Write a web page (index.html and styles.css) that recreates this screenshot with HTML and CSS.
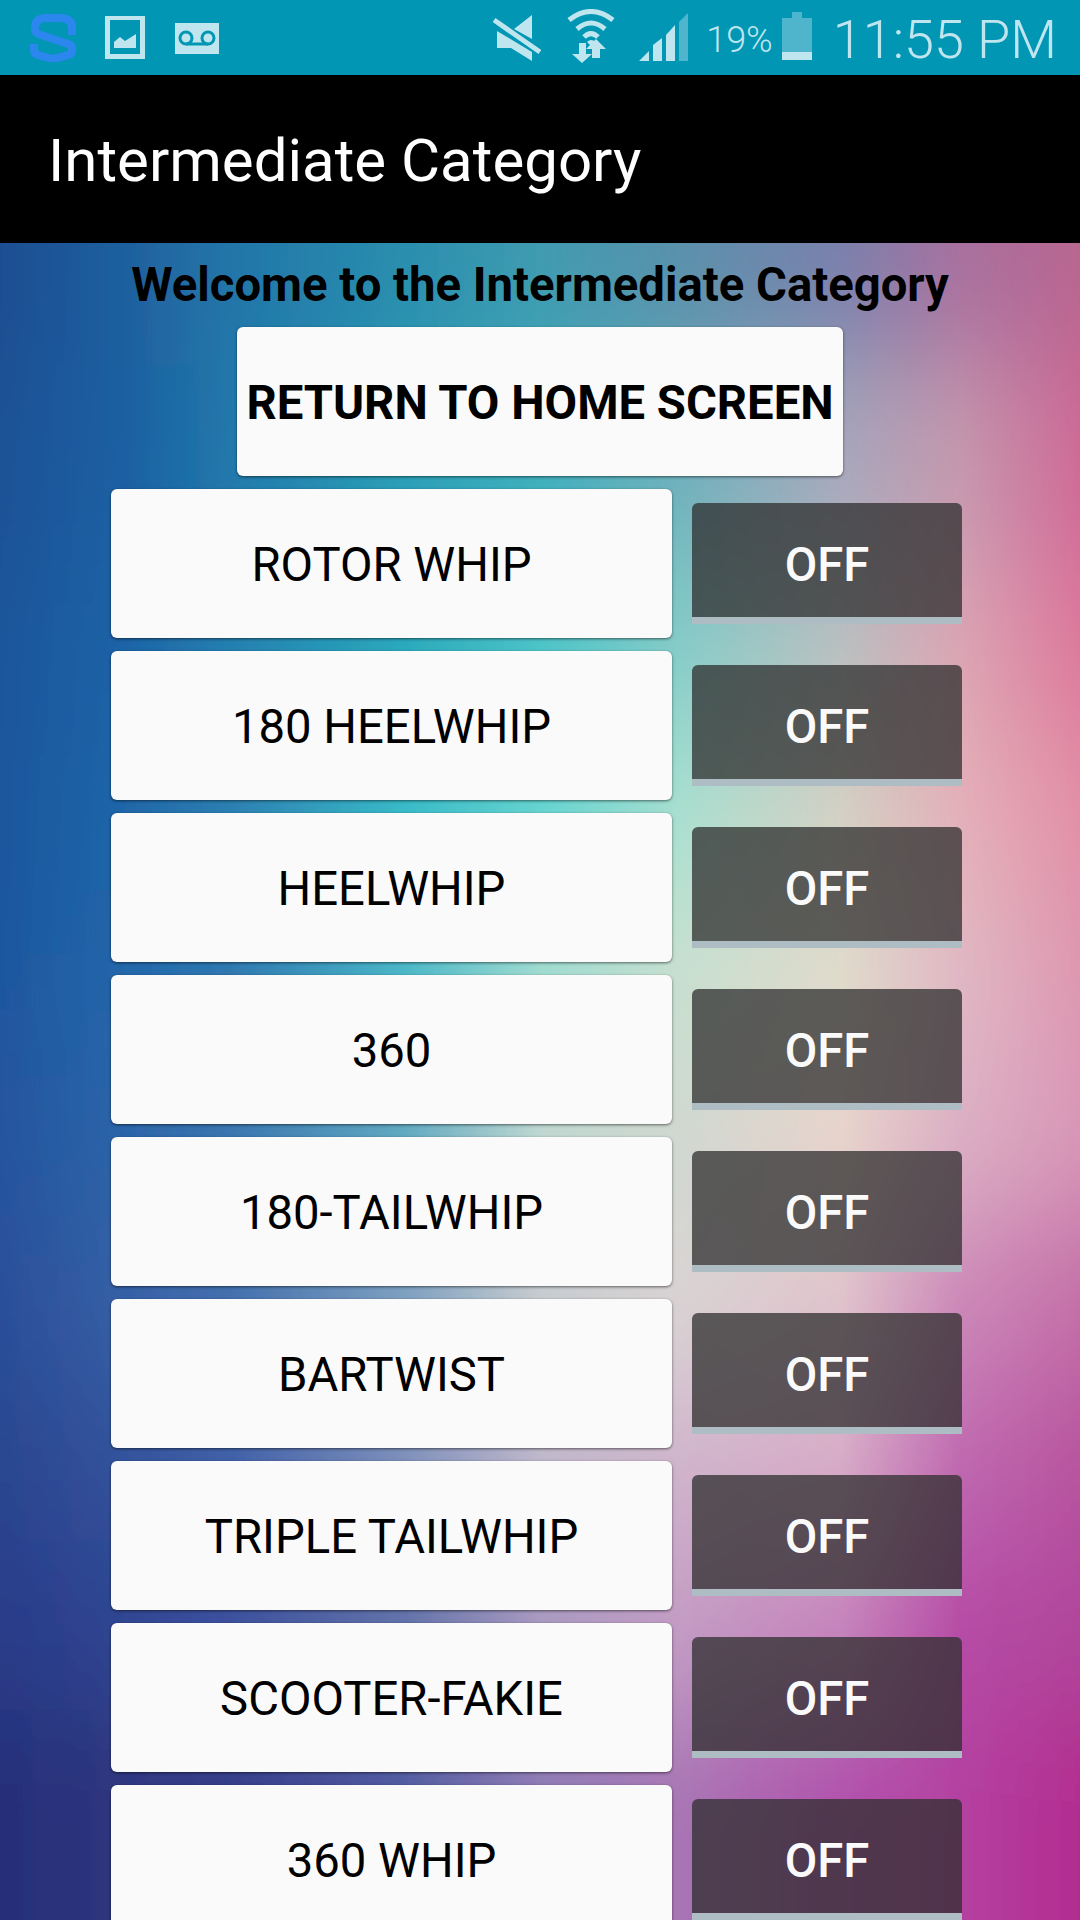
FILE: index.html
```html
<!DOCTYPE html>
<html>
<head>
    <title>Intermediate Category</title>
    <link rel="stylesheet" href="styles.css">
</head>
<body>
    <div class="status-bar">
        <svg class="icon-s" width="46" height="48" viewBox="0 0 46 48">
            <path d="M42 21V14Q42 4 30 4H16Q5 4 5 14V16Q5 19 10 20.500L38 30Q42 31 42 35V37Q42 40 38 41L23 45L8 41Q4 40 4 36V30" fill="none" stroke="#2b87ee" stroke-width="8"/>
        </svg>
        <svg class="icon-image" width="40" height="43" viewBox="0 0 40 43">
            <path fill-rule="evenodd" d="M0 0H40V43H0ZM5 4V38H35V4Z" fill="#bfe5ee"/>
            <path d="M9 32V26L15 21L20 25L31 18V32Z" fill="#bfe5ee"/>
        </svg>
        <svg class="icon-voicemail" width="44" height="31" viewBox="0 0 44 31">
            <rect width="44" height="31" fill="#bfe5ee"/>
            <circle cx="11" cy="15" r="6" fill="none" stroke="#0096b4" stroke-width="3"/>
            <circle cx="33" cy="15" r="6" fill="none" stroke="#0096b4" stroke-width="3"/>
            <path d="M11 21H33" stroke="#0096b4" stroke-width="3"/>
        </svg>
        <div class="status-right">
            <svg class="icon-mute" width="48" height="46" viewBox="0 0 48 46">
                <path d="M21 14L39 0V24ZM4 16L39 37V46L18 33H4Z" fill="#bfe5ee"/>
                <path d="M1 5L47 37" stroke="#bfe5ee" stroke-width="5"/>
            </svg>
            <svg class="icon-wifi" width="50" height="54" viewBox="0 0 50 54">
                <path d="M3 11Q25 -6 47 11" fill="none" stroke="#bfe5ee" stroke-width="5"/>
                <path d="M11 20Q25 8 39 20" fill="none" stroke="#bfe5ee" stroke-width="5"/>
                <path d="M18 28Q25 21 32 28" fill="none" stroke="#bfe5ee" stroke-width="5"/>
                <path d="M21 33Q25 29 30 33L25 37Z" fill="#bfe5ee"/>
                <path d="M13 34H20V45H26L16 54L6 45H13ZM26 49V40H20L30 30L40 40H34V49Z" fill="#bfe5ee"/>
            </svg>
            <svg class="icon-signal" width="49" height="48" viewBox="0 0 49 48">
                <path d="M0 48L10 38V48ZM14 48V32L23 25V48ZM27 48V22L36 12V48Z" fill="#bfe5ee"/>
                <path d="M40 48V9L49 0V48Z" fill="#4fb5cc"/>
            </svg>
            <span class="battery-text">19%</span>
            <div class="battery">
                <div class="battery-cap"></div>
                <div class="battery-body"><div class="battery-level"></div></div>
            </div>
            <span class="clock">11:55 PM</span>
        </div>
    </div>

    <div class="app-bar">Intermediate Category</div>

    <div class="content">
        <!-- wallpaper: colour bands blurred together top to bottom -->
        <svg class="wallpaper" width="1080" height="1677" viewBox="0 243 1080 1677">
            <defs>
                <filter id="soften" filterUnits="userSpaceOnUse" x="0" y="0" width="1080" height="2200">
                    <feGaussianBlur stdDeviation="0 60"/>
                </filter>
                <linearGradient id="band1" gradientUnits="userSpaceOnUse" x1="0" x2="1080" y1="0" y2="0">
                    <stop offset="0" stop-color="#1f4e92"/><stop offset="0.111" stop-color="#1f5f9e"/><stop offset="0.213" stop-color="#2275a8"/><stop offset="0.374" stop-color="#2a8eae"/><stop offset="0.5" stop-color="#3f9bb0"/><stop offset="0.63" stop-color="#5a90ab"/><stop offset="0.778" stop-color="#7a80ac"/><stop offset="0.889" stop-color="#a8709f"/><stop offset="1" stop-color="#b86690"/>
                </linearGradient>
                <linearGradient id="band2" gradientUnits="userSpaceOnUse" x1="0" x2="1080" y1="0" y2="0">
                    <stop offset="0" stop-color="#1d5296"/><stop offset="0.111" stop-color="#1b5fa2"/><stop offset="0.213" stop-color="#2178ab"/><stop offset="0.374" stop-color="#2a9fb6"/><stop offset="0.5" stop-color="#40aebc"/><stop offset="0.63" stop-color="#6fb0bc"/><stop offset="0.778" stop-color="#a8a8bc"/><stop offset="0.889" stop-color="#c598ae"/><stop offset="1" stop-color="#cf6b98"/>
                </linearGradient>
                <linearGradient id="band3" gradientUnits="userSpaceOnUse" x1="0" x2="1080" y1="0" y2="0">
                    <stop offset="0" stop-color="#1d559a"/><stop offset="0.111" stop-color="#1c62a6"/><stop offset="0.213" stop-color="#2480b0"/><stop offset="0.374" stop-color="#2aa8bc"/><stop offset="0.5" stop-color="#4cc4c8"/><stop offset="0.63" stop-color="#85ccc8"/><stop offset="0.778" stop-color="#b8c0c0"/><stop offset="0.889" stop-color="#dca4b4"/><stop offset="1" stop-color="#dd7a9c"/>
                </linearGradient>
                <linearGradient id="band4" gradientUnits="userSpaceOnUse" x1="0" x2="1080" y1="0" y2="0">
                    <stop offset="0" stop-color="#1f569c"/><stop offset="0.111" stop-color="#1f65a8"/><stop offset="0.213" stop-color="#2c80b2"/><stop offset="0.374" stop-color="#38bcc8"/><stop offset="0.5" stop-color="#60d4d0"/><stop offset="0.63" stop-color="#a8e0d0"/><stop offset="0.778" stop-color="#d4d0c4"/><stop offset="0.889" stop-color="#e4b0b8"/><stop offset="1" stop-color="#e290a8"/>
                </linearGradient>
                <linearGradient id="band5" gradientUnits="userSpaceOnUse" x1="0" x2="1080" y1="0" y2="0">
                    <stop offset="0" stop-color="#1f579e"/><stop offset="0.111" stop-color="#2066aa"/><stop offset="0.213" stop-color="#2f78b0"/><stop offset="0.374" stop-color="#4ab8c8"/><stop offset="0.5" stop-color="#a0dcd0"/><stop offset="0.63" stop-color="#c8e0d0"/><stop offset="0.778" stop-color="#e0dccc"/><stop offset="0.889" stop-color="#e0b8c4"/><stop offset="1" stop-color="#de98b0"/>
                </linearGradient>
                <linearGradient id="band6" gradientUnits="userSpaceOnUse" x1="0" x2="1080" y1="0" y2="0">
                    <stop offset="0" stop-color="#25559e"/><stop offset="0.111" stop-color="#2a64a8"/><stop offset="0.213" stop-color="#3a76b0"/><stop offset="0.374" stop-color="#60a8c0"/><stop offset="0.5" stop-color="#c0d8d0"/><stop offset="0.63" stop-color="#d0d8d0"/><stop offset="0.778" stop-color="#e8d4cc"/><stop offset="0.889" stop-color="#dcb0c4"/><stop offset="1" stop-color="#d898b8"/>
                </linearGradient>
                <linearGradient id="band7" gradientUnits="userSpaceOnUse" x1="0" x2="1080" y1="0" y2="0">
                    <stop offset="0" stop-color="#2b4f9a"/><stop offset="0.111" stop-color="#3560a6"/><stop offset="0.213" stop-color="#4470ae"/><stop offset="0.374" stop-color="#80a0c0"/><stop offset="0.5" stop-color="#c8ccd0"/><stop offset="0.63" stop-color="#dad4d4"/><stop offset="0.778" stop-color="#e0c4cc"/><stop offset="0.889" stop-color="#cc88b8"/><stop offset="1" stop-color="#c470a8"/>
                </linearGradient>
                <linearGradient id="band8" gradientUnits="userSpaceOnUse" x1="0" x2="1080" y1="0" y2="0">
                    <stop offset="0" stop-color="#2b4690"/><stop offset="0.111" stop-color="#33529c"/><stop offset="0.213" stop-color="#4060a8"/><stop offset="0.374" stop-color="#8090bc"/><stop offset="0.5" stop-color="#c0b8cc"/><stop offset="0.63" stop-color="#d0b4cc"/><stop offset="0.778" stop-color="#d8acc8"/><stop offset="0.889" stop-color="#bf68b0"/><stop offset="1" stop-color="#b8549f"/>
                </linearGradient>
                <linearGradient id="band9" gradientUnits="userSpaceOnUse" x1="0" x2="1080" y1="0" y2="0">
                    <stop offset="0" stop-color="#2a3c8a"/><stop offset="0.111" stop-color="#2f4592"/><stop offset="0.213" stop-color="#3c509e"/><stop offset="0.374" stop-color="#6070a8"/><stop offset="0.5" stop-color="#a898c0"/><stop offset="0.63" stop-color="#c49cc4"/><stop offset="0.778" stop-color="#c684bc"/><stop offset="0.889" stop-color="#b64ca6"/><stop offset="1" stop-color="#b0469c"/>
                </linearGradient>
                <linearGradient id="band10" gradientUnits="userSpaceOnUse" x1="0" x2="1080" y1="0" y2="0">
                    <stop offset="0" stop-color="#262e78"/><stop offset="0.111" stop-color="#2e357e"/><stop offset="0.213" stop-color="#363c88"/><stop offset="0.374" stop-color="#505aa0"/><stop offset="0.5" stop-color="#8c78b4"/><stop offset="0.63" stop-color="#a874b4"/><stop offset="0.778" stop-color="#b050ac"/><stop offset="0.889" stop-color="#b440a0"/><stop offset="1" stop-color="#b32c90"/>
                </linearGradient>
            </defs>
            <g filter="url(#soften)">
                <rect x="0" y="0" width="1080" height="365" fill="url(#band1)"/>
                <rect x="0" y="365" width="1080" height="200" fill="url(#band2)"/>
                <rect x="0" y="565" width="1080" height="165" fill="url(#band3)"/>
                <rect x="0" y="730" width="1080" height="160" fill="url(#band4)"/>
                <rect x="0" y="890" width="1080" height="160" fill="url(#band5)"/>
                <rect x="0" y="1050" width="1080" height="165" fill="url(#band6)"/>
                <rect x="0" y="1215" width="1080" height="165" fill="url(#band7)"/>
                <rect x="0" y="1380" width="1080" height="160" fill="url(#band8)"/>
                <rect x="0" y="1540" width="1080" height="170" fill="url(#band9)"/>
                <rect x="0" y="1710" width="1080" height="490" fill="url(#band10)"/>
            </g>
        </svg>

        <h1 class="welcome">Welcome to the Intermediate Category</h1>
        <button class="btn btn-home">RETURN TO HOME SCREEN</button>
        <div class="trick-list">
            <div class="trick-row"><button class="btn btn-trick">ROTOR WHIP</button><button class="toggle">OFF</button></div>
            <div class="trick-row"><button class="btn btn-trick">180 HEELWHIP</button><button class="toggle">OFF</button></div>
            <div class="trick-row"><button class="btn btn-trick">HEELWHIP</button><button class="toggle">OFF</button></div>
            <div class="trick-row"><button class="btn btn-trick">360</button><button class="toggle">OFF</button></div>
            <div class="trick-row"><button class="btn btn-trick">180-TAILWHIP</button><button class="toggle">OFF</button></div>
            <div class="trick-row"><button class="btn btn-trick">BARTWIST</button><button class="toggle">OFF</button></div>
            <div class="trick-row"><button class="btn btn-trick">TRIPLE TAILWHIP</button><button class="toggle">OFF</button></div>
            <div class="trick-row"><button class="btn btn-trick">SCOOTER-FAKIE</button><button class="toggle">OFF</button></div>
            <div class="trick-row"><button class="btn btn-trick">360 WHIP</button><button class="toggle">OFF</button></div>
        </div>
    </div>
</body>
</html>
```

FILE: styles.css
```css
html, body {
    margin: 0;
    height: 1920px;
    overflow: hidden;
}
body {
    font-family: Roboto, "Liberation Sans", sans-serif;
    display: flex;
    flex-direction: column;
}

.status-bar {
    height: 75px;
    flex: none;
    display: flex;
    align-items: flex-start;
    background-color: #0096b4;
    color: #bfe5ee;
}
.icon-s {
    margin: 14px 0 0 30px;
}
.icon-image {
    margin: 16px 0 0 29px;
}
.icon-voicemail {
    margin: 23px 0 0 30px;
}
.status-right {
    margin-left: auto;
    display: flex;
    align-items: flex-start;
}
.icon-mute {
    margin-top: 15px;
}
.icon-wifi {
    margin: 9px 0 0 25px;
}
.icon-signal {
    margin: 13px 0 0 23px;
}
.battery-text {
    margin: 18px 0 0 18px;
    font-size: 36px;
    font-weight: 300;
    line-height: 44px;
}
.battery {
    margin: 12px 0 0 9px;
    width: 30px;
}
.battery-cap {
    width: 10px;
    height: 6px;
    margin: 0 auto;
    background-color: #4fb5cc;
}
.battery-body {
    height: 42px;
    background-color: #4fb5cc;
    display: flex;
    align-items: flex-end;
}
.battery-level {
    width: 100%;
    height: 8px;
    background-color: #bfe5ee;
}
.clock {
    margin: 10px 23px 0 21px;
    font-size: 54px;
    font-weight: 300;
    line-height: 60px;
}

.app-bar {
    height: 168px;
    flex: none;
    box-sizing: border-box;
    padding-left: 48px;
    background-color: #000;
    color: #fff;
    font-size: 60px;
    line-height: 172px;
}

.content {
    position: relative;
    flex: 1;
    display: flex;
    flex-direction: column;
    align-items: center;
    overflow: hidden;
}
.wallpaper {
    position: absolute;
    top: 0;
    left: 0;
}
.welcome {
    position: relative;
    margin: 15px 0 0;
    font-size: 47.250px;
    font-weight: 700;
    line-height: 54px;
    color: #000;
}

.btn {
    border: none;
    border-radius: 6px;
    background-color: #fafafa;
    color: #000;
    font-family: inherit;
    box-shadow: 0 1px 3px rgba(0, 0, 0, 0.55);
    padding: 2px 0 0;
}
.btn-home {
    position: relative;
    flex: none;
    width: 606px;
    height: 149px;
    margin-top: 15px;
    font-size: 47.250px;
    font-weight: 700;
}

.trick-list {
    position: relative;
    flex: none;
    margin-top: 13px;
    margin-right: 7px;
    display: flex;
    flex-direction: column;
    gap: 13px;
}
.trick-row {
    display: flex;
    align-items: flex-start;
    gap: 20px;
}
.btn-trick {
    width: 561px;
    height: 149px;
    font-size: 47.250px;
}
.toggle {
    width: 270px;
    height: 121px;
    margin-top: 14px;
    padding: 10px 0 0;
    border: none;
    border-bottom: 7px solid #aebcc4;
    border-radius: 6px 6px 0 0;
    background-color: rgba(47, 47, 47, 0.75);
    background-clip: padding-box;
    color: #fafafa;
    font-family: inherit;
    font-size: 47.250px;
    font-weight: 500;
}
```
